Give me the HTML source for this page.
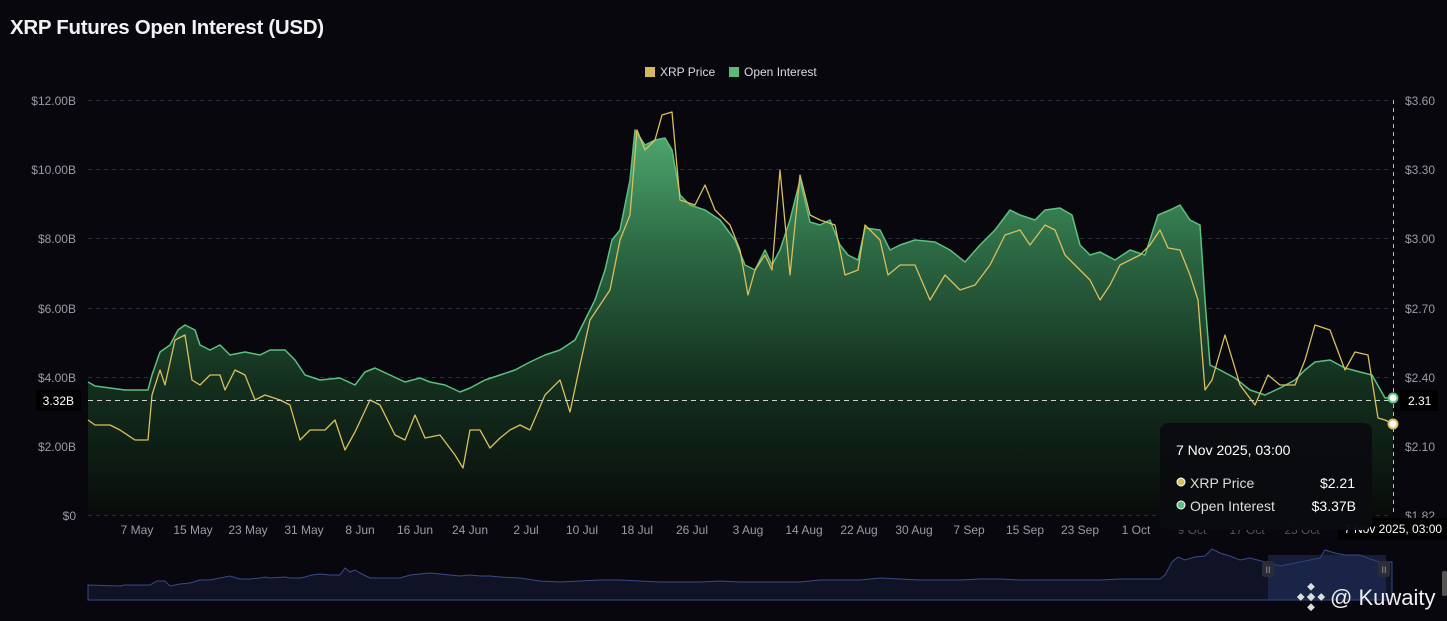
<!DOCTYPE html>
<html><head><meta charset="utf-8"><style>
html,body{margin:0;padding:0;background:#07070d;width:1447px;height:621px;overflow:hidden;font-family:"Liberation Sans",sans-serif;}
</style></head><body>
<svg width="1447" height="621" xmlns="http://www.w3.org/2000/svg" style="position:absolute;left:0;top:0;font-family:'Liberation Sans',sans-serif">
<defs>
<linearGradient id="g" x1="0" y1="0" x2="0" y2="1">
<stop offset="0" stop-color="#4fa86e"/><stop offset="0.3" stop-color="#2d6b45"/><stop offset="0.65" stop-color="#14301f"/><stop offset="1" stop-color="#080c0a"/>
</linearGradient>
</defs>
<text x="10" y="34" fill="#f2f2f2" font-size="20.5" font-weight="bold" letter-spacing="-0.3">XRP Futures Open Interest (USD)</text>
<rect x="645" y="67" width="10" height="10" fill="#d4b85e"/><text x="660" y="76" fill="#ddd" font-size="12">XRP Price</text>
<rect x="729" y="67" width="10" height="10" fill="#5bb97a"/><text x="744" y="76" fill="#ddd" font-size="12">Open Interest</text>
<g stroke="#2a2d35" stroke-dasharray="4,4" stroke-width="1">
<line x1="88" y1="100.5" x2="1392" y2="100.5"/><line x1="88" y1="169.5" x2="1392" y2="169.5"/><line x1="88" y1="238.5" x2="1392" y2="238.5"/><line x1="88" y1="308.5" x2="1392" y2="308.5"/><line x1="88" y1="377.5" x2="1392" y2="377.5"/><line x1="88" y1="446.5" x2="1392" y2="446.5"/><line x1="88" y1="515.5" x2="1392" y2="515.5"/>
</g>
<g fill="#9a9ca3" font-size="12" text-anchor="end">
<text x="76" y="105">$12.00B</text><text x="76" y="174">$10.00B</text><text x="76" y="243">$8.00B</text><text x="76" y="313">$6.00B</text><text x="76" y="382">$4.00B</text><text x="76" y="451">$2.00B</text><text x="76" y="520">$0</text>
</g>
<g fill="#9a9ca3" font-size="12">
<text x="1405" y="105">$3.60</text><text x="1405" y="174">$3.30</text><text x="1405" y="243">$3.00</text><text x="1405" y="313">$2.70</text><text x="1405" y="382">$2.40</text><text x="1405" y="451">$2.10</text><text x="1405" y="520">$1.82</text>
</g>
<path d="M88,382 L95,386 110,388 125,390 148,390 152,375 160,352 170,345 178,330 185,325 195,330 200,345 210,350 220,345 230,355 245,352 260,355 270,350 285,350 295,360 305,375 320,380 340,378 355,385 365,372 375,368 390,375 405,382 420,378 430,382 445,385 460,392 470,388 485,380 500,375 515,370 530,362 545,355 560,350 575,340 585,320 595,300 605,270 612,240 620,230 630,180 635,130 645,145 655,140 665,138 672,150 680,195 690,205 705,210 720,220 735,240 745,265 755,270 765,250 772,265 780,250 790,220 800,180 810,222 820,225 830,220 840,245 848,255 858,260 865,228 880,230 890,250 900,245 915,240 935,242 950,250 965,262 980,245 995,230 1010,210 1020,215 1035,220 1045,210 1060,208 1072,215 1080,245 1090,255 1100,252 1115,260 1130,250 1145,255 1158,215 1170,210 1180,205 1190,220 1200,225 1205,300 1210,365 1220,370 1235,378 1250,390 1265,395 1280,388 1295,380 1305,370 1315,362 1330,360 1345,368 1360,372 1372,375 1385,398 1393,398 L1393,515 L88,515 Z" fill="url(#g)" stroke="none"/>
<path d="M88,382 L95,386 110,388 125,390 148,390 152,375 160,352 170,345 178,330 185,325 195,330 200,345 210,350 220,345 230,355 245,352 260,355 270,350 285,350 295,360 305,375 320,380 340,378 355,385 365,372 375,368 390,375 405,382 420,378 430,382 445,385 460,392 470,388 485,380 500,375 515,370 530,362 545,355 560,350 575,340 585,320 595,300 605,270 612,240 620,230 630,180 635,130 645,145 655,140 665,138 672,150 680,195 690,205 705,210 720,220 735,240 745,265 755,270 765,250 772,265 780,250 790,220 800,180 810,222 820,225 830,220 840,245 848,255 858,260 865,228 880,230 890,250 900,245 915,240 935,242 950,250 965,262 980,245 995,230 1010,210 1020,215 1035,220 1045,210 1060,208 1072,215 1080,245 1090,255 1100,252 1115,260 1130,250 1145,255 1158,215 1170,210 1180,205 1190,220 1200,225 1205,300 1210,365 1220,370 1235,378 1250,390 1265,395 1280,388 1295,380 1305,370 1315,362 1330,360 1345,368 1360,372 1372,375 1385,398 1393,398" fill="none" stroke="#5cc07f" stroke-width="1.5" stroke-linejoin="round"/>
<path d="M88,420 L95,425 110,425 120,430 135,440 148,440 152,395 160,370 165,385 175,340 185,335 192,380 200,385 210,375 220,375 225,390 235,370 245,375 255,400 265,395 280,400 290,405 300,440 310,430 325,430 335,420 345,450 355,432 370,400 380,405 395,435 405,440 415,415 425,438 440,435 455,455 463,468 470,430 480,430 490,448 500,438 510,430 520,425 530,430 545,395 560,380 570,412 580,365 590,320 600,305 610,290 620,240 630,215 637,130 645,150 655,140 662,115 672,112 680,200 695,205 705,185 715,210 730,225 740,250 748,295 755,270 765,255 772,270 780,170 790,275 800,175 810,215 820,220 835,225 845,275 858,270 865,225 880,240 888,275 900,265 915,265 930,300 945,275 960,290 975,285 990,265 1005,235 1020,230 1030,245 1045,225 1055,230 1065,255 1080,270 1090,280 1100,300 1110,285 1120,265 1140,255 1150,245 1160,230 1168,248 1180,250 1190,275 1198,300 1205,390 1212,380 1225,335 1240,385 1255,405 1268,375 1280,385 1295,385 1305,360 1315,325 1330,330 1345,370 1355,352 1368,355 1378,418 1385,420 1393,424" fill="none" stroke="#d9bf5e" stroke-width="1.3" stroke-linejoin="round"/>
<line x1="88" y1="400.5" x2="1392" y2="400.5" stroke="#cfcfcf" stroke-dasharray="5,4"/>
<line x1="1393.5" y1="100" x2="1393.5" y2="515" stroke="#bbb" stroke-dasharray="4,4"/>
<rect x="36" y="390" width="45" height="21" fill="#000"/><text x="74" y="405" fill="#fff" font-size="12" text-anchor="end">3.32B</text>
<rect x="1400" y="390" width="38" height="21" rx="2" fill="#000"/><text x="1408" y="405" fill="#fff" font-size="12">2.31</text>
<circle cx="1393" cy="398" r="4.5" fill="#fff" stroke="#5cc07f" stroke-width="2"/>
<circle cx="1393" cy="424" r="4.5" fill="#fff" stroke="#d9bf5e" stroke-width="2"/>
<g fill="#9a9ca3" font-size="12" text-anchor="middle">
<text x="137" y="534">7 May</text><text x="193" y="534">15 May</text><text x="248" y="534">23 May</text><text x="304" y="534">31 May</text><text x="360" y="534">8 Jun</text><text x="415" y="534">16 Jun</text><text x="470" y="534">24 Jun</text><text x="526" y="534">2 Jul</text><text x="582" y="534">10 Jul</text><text x="637" y="534">18 Jul</text><text x="692" y="534">26 Jul</text><text x="748" y="534">3 Aug</text><text x="804" y="534">14 Aug</text><text x="859" y="534">22 Aug</text><text x="914" y="534">30 Aug</text><text x="969" y="534">7 Sep</text><text x="1025" y="534">15 Sep</text><text x="1080" y="534">23 Sep</text><text x="1136" y="534">1 Oct</text>
<text x="1192" y="534" fill="#555">9 Oct</text><text x="1247" y="534" fill="#555">17 Oct</text><text x="1302" y="534" fill="#555">25 Oct</text>
</g>
<rect x="1338" y="518" width="109" height="22" fill="#000"/><text x="1344" y="533" fill="#fff" font-size="12">7 Nov 2025, 03:00</text>
<rect x="1160" y="423" width="212" height="107" rx="8" fill="#0a0b10" fill-opacity="0.97"/>
<text x="1176" y="455" fill="#fff" font-size="14">7 Nov 2025, 03:00</text>
<circle cx="1181" cy="482" r="4" fill="#d9bf5e" stroke="#fff" stroke-width="1"/><text x="1190" y="488" fill="#ddd" font-size="14">XRP Price</text><text x="1355" y="488" fill="#fff" font-size="14" text-anchor="end">$2.21</text>
<circle cx="1181" cy="505" r="4" fill="#5cc07f" stroke="#fff" stroke-width="1"/><text x="1190" y="511" fill="#ddd" font-size="14">Open Interest</text><text x="1356" y="511" fill="#fff" font-size="14" text-anchor="end">$3.37B</text>
<path d="M88,585 L120,586 125,585 150,585 157,581 165,581 170,586 180,584 190,583 200,580 210,580 220,578 230,576 240,579 250,579 260,578 265,577 270,578 285,577 290,578 300,578 305,577 312,575 320,574 330,575 340,575 345,568 350,572 355,570 360,573 370,578 380,578 400,578 410,575 420,574 430,573 440,574 450,575 460,576 470,575 480,576 490,576 500,577 520,578 540,581 560,582 580,581 600,580 620,580 640,581 660,582 680,582 700,582 720,581 740,582 760,582 780,582 800,582 820,580 840,580 860,580 870,579 880,578 900,579 920,580 940,580 960,580 980,579 1000,579 1020,580 1040,580 1060,580 1080,580 1100,580 1120,579 1140,579 1160,579 1165,575 1172,562 1178,557 1185,560 1195,557 1205,556 1212,549 1220,553 1230,556 1240,560 1250,558 1265,562 1280,566 1300,562 1320,558 1325,550 1335,553 1345,555 1360,555 1370,559 1380,562 1392,562 L1392,600 L88,600 Z" fill="#0f1325" stroke="#3a4a8a" stroke-width="1"/>
<rect x="1268" y="555" width="118" height="45" fill="#283a72" fill-opacity="0.45"/>
<rect x="1262" y="561" width="12" height="16" rx="3" fill="#2a2d38"/><text x="1268" y="573" fill="#999" font-size="9" text-anchor="middle">II</text>
<rect x="1378" y="561" width="12" height="16" rx="3" fill="#2a2d38"/><text x="1384" y="573" fill="#999" font-size="9" text-anchor="middle">II</text>
<rect x="1442" y="571" width="5" height="25" rx="2" fill="#555"/>
<g fill="#ddd" transform="translate(1311,597) rotate(45)">
<rect x="-3" y="-3" width="6" height="6"/>
<rect x="-10" y="-10" width="5.5" height="5.5"/>
<rect x="4.5" y="4.5" width="5.5" height="5.5"/>
<rect x="-10" y="4.5" width="5.5" height="5.5"/>
<rect x="4.5" y="-10" width="5.5" height="5.5"/>
</g>
<text x="1330" y="605" fill="#eee" font-size="22">@ Kuwaity</text>
</svg>
</body></html>
